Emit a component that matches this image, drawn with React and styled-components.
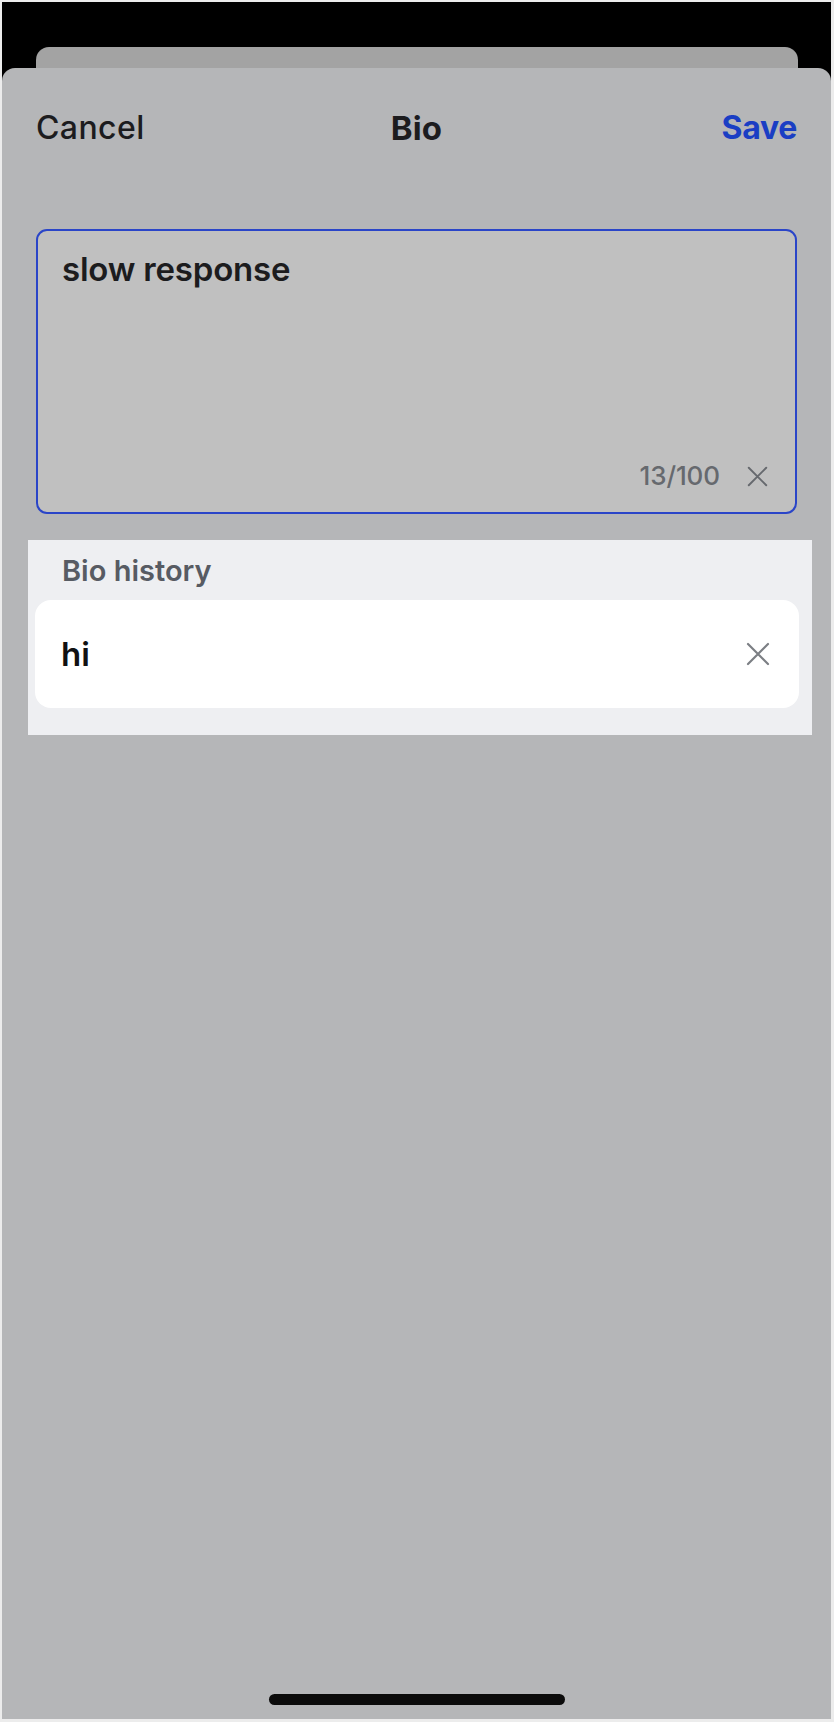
import styled, { createGlobalStyle } from "styled-components";

const GlobalStyle = createGlobalStyle`
  html, body {
    margin: 0;
    padding: 0;
    background: #ececec;
  }
  body {
    font-family: Inter, "Noto Sans", "Liberation Sans", sans-serif;
    -webkit-font-smoothing: antialiased;
  }
`;

const Frame = styled.div`
  box-sizing: border-box;
  width: 834px;
  height: 1722px;
  border-style: solid;
  border-color: #ececec;
  border-width: 2px 3px 3px 2px;
  background: #000;
  padding-top: 45px;
  display: flex;
  flex-direction: column;
`;

const BackCard = styled.div`
  height: 21px;
  margin: 0 33px 0 34px;
  background: #a3a3a3;
  border-radius: 13px 13px 0 0;
  flex-shrink: 0;
`;

const Sheet = styled.div`
  flex: 1;
  display: flex;
  flex-direction: column;
  background: #b5b6b8;
  border-radius: 13px 13px 0 0;
  padding: 40px 34px 0;
`;

const Header = styled.div`
  display: grid;
  grid-template-columns: 1fr auto 1fr;
  align-items: center;
  height: 40px;
  line-height: 40px;
  font-size: 32px;
`;

const HeaderButton = styled.span`
  font-weight: ${(p) => (p.$primary ? 700 : 500)};
  color: ${(p) => (p.$primary ? "#1a3ec4" : "#1c1c1e")};
  justify-self: ${(p) => (p.$primary ? "end" : "start")};
  letter-spacing: ${(p) => (p.$primary ? "-0.3px" : "0.4px")};
`;

const Title = styled.span`
  font-size: 33px;
  font-weight: 700;
  color: #1c1c1e;
  letter-spacing: 0.2px;
`;

const InputBox = styled.div`
  box-sizing: border-box;
  margin-top: 81px;
  height: 285px;
  border: 2px solid #2a45c8;
  border-radius: 11px;
  background: #c0c0c0;
  padding: 18px 27px 21px 24px;
  display: flex;
  flex-direction: column;
`;

const InputText = styled.div`
  font-size: 33px;
  line-height: 40px;
  font-weight: 600;
  color: #1c1c1e;
  letter-spacing: -0.2px;
`;

const InputFooter = styled.div`
  margin-top: auto;
  display: flex;
  justify-content: flex-end;
  align-items: center;
  gap: 27px;
  height: 30px;
`;

const Counter = styled.span`
  font-size: 26px;
  line-height: 30px;
  font-weight: 500;
  color: #66696e;
  letter-spacing: -0.1px;
`;

const HistoryPanel = styled.div`
  margin: 26px -15px 0 -8px;
  background: #eeeff2;
  padding: 13px 13px 27px 7px;
`;

const HistoryLabel = styled.div`
  padding-left: 27px;
  font-size: 29px;
  line-height: 36px;
  font-weight: 600;
  color: #575b63;
  letter-spacing: 0;
`;

const HistoryItem = styled.div`
  margin-top: 11px;
  height: 108px;
  box-sizing: border-box;
  background: #fff;
  border-radius: 16px;
  padding: 0 29px 0 26px;
  display: flex;
  align-items: center;
  justify-content: space-between;
`;

const HistoryText = styled.span`
  font-size: 33px;
  font-weight: 600;
  color: #111113;
`;

const HomeIndicator = styled.div`
  margin: auto auto 14px;
  width: 296px;
  height: 11px;
  border-radius: 6px;
  background: #0b0b0b;
`;

function CloseIcon({ size = 22, color = "#66696e" }) {
  return (
    <svg width={size} height={size} viewBox="0 0 24 24" fill="none">
      <path
        d="M2 2 L22 22 M22 2 L2 22"
        stroke={color}
        strokeWidth="2.2"
        strokeLinecap="round"
      />
    </svg>
  );
}

export default function App() {
  return (
    <>
      <GlobalStyle />
      <Frame>
        <BackCard />
        <Sheet>
          <Header>
            <HeaderButton>Cancel</HeaderButton>
            <Title>Bio</Title>
            <HeaderButton $primary>Save</HeaderButton>
          </Header>

          <InputBox>
            <InputText>slow response</InputText>
            <InputFooter>
              <Counter>13/100</Counter>
              <CloseIcon size={21} />
            </InputFooter>
          </InputBox>

          <HistoryPanel>
            <HistoryLabel>Bio history</HistoryLabel>
            <HistoryItem>
              <HistoryText>hi</HistoryText>
              <CloseIcon size={24} color="#7c7f84" />
            </HistoryItem>
          </HistoryPanel>

          <HomeIndicator />
        </Sheet>
      </Frame>
    </>
  );
}
